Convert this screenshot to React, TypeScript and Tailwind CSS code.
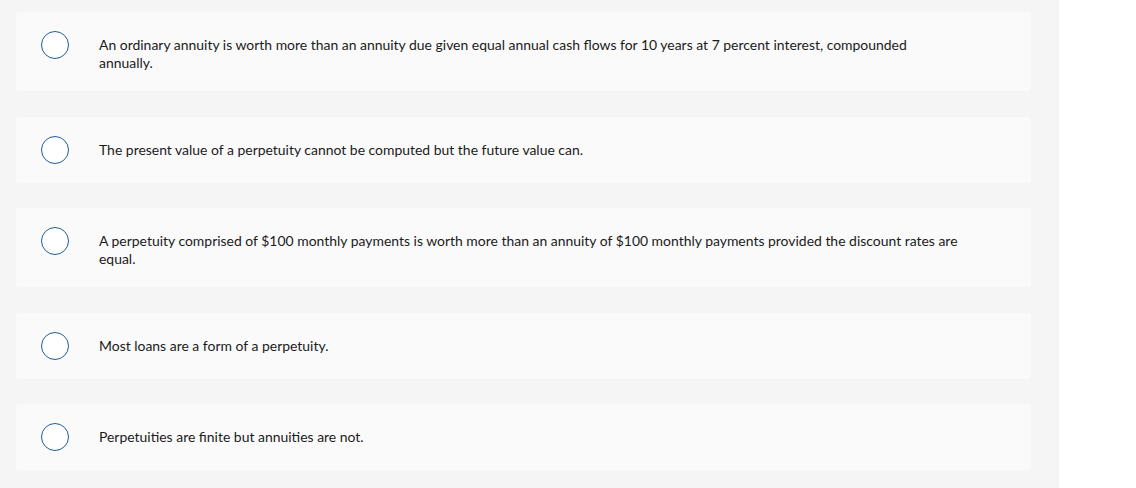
const options = [
  'An ordinary annuity is worth more than an annuity due given equal annual cash flows for 10 years at 7 percent interest, compounded annually.',
  'The present value of a perpetuity cannot be computed but the future value can.',
  'A perpetuity comprised of $100 monthly payments is worth more than an annuity of $100 monthly payments provided the discount rates are equal.',
  'Most loans are a form of a perpetuity.',
  'Perpetuities are finite but annuities are not.',
];

export default function App() {
  return (
    <div className="min-h-screen bg-white font-['Lato','Liberation_Sans',sans-serif]">
      <div className="w-[1059px] min-h-[488px] bg-[#f5f5f5] pl-4 pr-[28px] pt-3 flex flex-col gap-[25.5px]">
        {options.map((text, i) => (
          <div key={i} className="flex items-start bg-[#fafafa] rounded-[3px] pl-[25px] pr-[68px] py-[19px]">
            <button
              type="button"
              className="shrink-0 w-7 h-7 rounded-full border-[1.5px] border-[#1f5c99] bg-white"
              aria-label={`Option ${i + 1}`}
            />
            <p className="ml-[30px] mt-[5px] text-[13.95px] leading-[18px] text-[#1b1b1b]">{text}</p>
          </div>
        ))}
      </div>
    </div>
  );
}
